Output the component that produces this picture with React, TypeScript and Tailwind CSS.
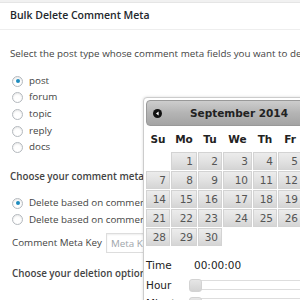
import React from "react";

const postTypes = ["post", "forum", "topic", "reply", "docs"];
const dayNames = ["Su", "Mo", "Tu", "We", "Th", "Fr", "Sa"];

function Radio({ checked, label }: { checked?: boolean; label: string }) {
  return (
    <label className="flex items-center gap-[6px] h-[16.7px]">
      <span className="w-[11px] h-[11px] rounded-full border border-[#b4b9be] bg-white shadow-[inset_0_1px_2px_rgba(0,0,0,0.1)] flex items-center justify-center shrink-0">
        {checked && <span className="w-[4px] h-[4px] rounded-full bg-[#1e8cbe]" />}
      </span>
      <span className="whitespace-nowrap">{label}</span>
    </label>
  );
}

function DayCell({ day }: { day?: number }) {
  if (!day) return <div className="h-[18px]" />;
  return (
    <div className="h-[18px] border border-[#d3d3d3] bg-linear-to-b from-[#ececec] via-[#e2e2e2] to-[#d5d5d5] text-right pr-[3px] leading-[16px] text-[#555]">
      {day}
    </div>
  );
}

export default function App() {
  const days: (number | undefined)[] = [undefined];
  for (let i = 1; i <= 30; i++) days.push(i);

  return (
    <div className="w-[300px] h-[300px] overflow-hidden relative bg-[#f1f1f1] font-['Open_Sans',sans-serif] text-[#444]">
      <div className="mt-[2px] bg-white border-t border-[#e5e5e5] h-[298px]">
        <div className="h-[27px] border-b border-[#eee] px-[10px] flex items-center">
          <h3 className="text-[10.5px] font-semibold text-[#23282d]">Bulk Delete Comment Meta</h3>
        </div>

        <div className="px-[10px] text-[9.8px]">
          <p className="mt-[17px] whitespace-nowrap">Select the post type whose comment meta fields you want to delete</p>

          <div className="mt-[11px] pl-[2px]">
            {postTypes.map((t, i) => (
              <Radio key={t} label={t} checked={i === 0} />
            ))}
          </div>

          <p className="mt-[14px] font-semibold whitespace-nowrap">Choose your comment meta fields</p>

          <div className="mt-[10px] pl-[2px]">
            <Radio checked label="Delete based on comment meta key name only" />
            <Radio label="Delete based on comment meta key name and value" />
          </div>

          <div className="mt-[5px] pl-[2px] flex items-center gap-[4px]">
            <span className="whitespace-nowrap">Comment Meta Key</span>
            <input
              className="h-[20px] w-[120px] border border-[#ddd] px-[4px] text-[9.8px] shadow-[inset_0_1px_2px_rgba(0,0,0,0.07)] placeholder:text-[#a0a5aa] outline-none"
              placeholder="Meta Key"
            />
          </div>

          <p className="mt-[14px] pl-[2px] font-semibold whitespace-nowrap">Choose your deletion options</p>
        </div>
      </div>

      {/* datepicker overlay */}
      <div className="absolute left-[143px] top-[97px] w-[192px] bg-white border border-[#ccc] rounded-[4px] p-[2px] font-['DejaVu_Sans',Verdana,sans-serif] text-[10.5px] leading-[16px] shadow-[0_0_3px_rgba(0,0,0,0.15)]">
        <div className="h-[26px] rounded-[4px] border border-[#999] bg-linear-to-b from-[#cdcdcd] via-[#b4b4b4] to-[#a4a4a4] flex items-center relative">
          <svg className="absolute left-[6px] top-[8px]" width="9" height="9" viewBox="0 0 9 9">
            <circle cx="4.5" cy="4.5" r="4.5" fill="#111" />
            <path d="M5.6 2.4 L3 4.5 L5.6 6.6 Z" fill="#fff" />
          </svg>
          <div className="w-full text-center font-bold text-[#222]">September 2014</div>
        </div>

        <div className="grid grid-cols-[24px_26px_24px_29px_24px_24px_24px] gap-[1px] mt-[1px]">
          {dayNames.map((d) => (
            <div key={d} className="h-[24px] flex items-center justify-center font-bold text-[#222]">
              {d}
            </div>
          ))}
          {days.map((d, i) => (
            <DayCell key={i} day={d} />
          ))}
        </div>

        <div className="mt-[11px] text-[#222]">
          <div className="flex items-center h-[16px]">
            <span className="w-[48px]">Time</span>
            <span>00:00:00</span>
          </div>
          <div className="flex items-center h-[16px] mt-[4px]">
            <span className="w-[43px]">Hour</span>
            <div className="relative flex-1 h-[10px] border border-[#ddd] rounded-[3px] bg-white">
              <span className="absolute -left-px -top-[2px] w-[13px] h-[13px] rounded-[3px] border border-[#d3d3d3] bg-linear-to-b from-[#e6e6e6] to-[#d3d3d3]" />
            </div>
          </div>
          <div className="flex items-center h-[16px] mt-[2px]">
            <span className="w-[43px]">Minute</span>
            <div className="relative flex-1 h-[10px] border border-[#ddd] rounded-[3px] bg-white">
              <span className="absolute -left-px -top-[2px] w-[13px] h-[13px] rounded-[3px] border border-[#d3d3d3] bg-linear-to-b from-[#e6e6e6] to-[#d3d3d3]" />
            </div>
          </div>
        </div>
      </div>
    </div>
  );
}
